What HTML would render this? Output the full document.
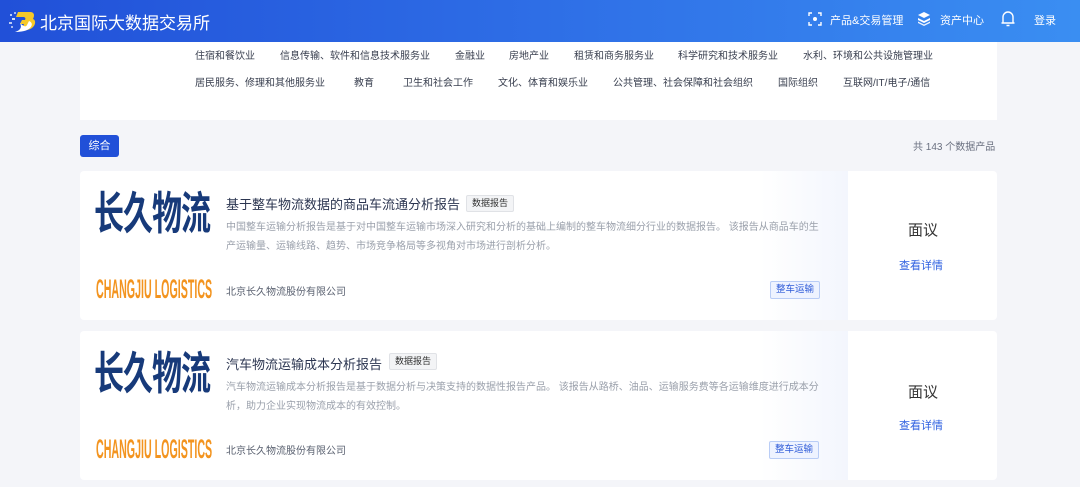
<!DOCTYPE html>
<html><head><meta charset="utf-8"><style>
*{margin:0;padding:0;box-sizing:border-box}
body{width:1080px;height:487px;overflow:hidden;background:#f4f5f9;font-family:"Liberation Sans","Noto Sans CJK SC",sans-serif;position:relative}
.a{position:absolute;white-space:nowrap}
.hdr{position:absolute;left:0;top:0;width:1080px;height:42px;background:linear-gradient(90deg,#2150d8,#2e6ee6 50%,#3a8ef2)}
.panel{position:absolute;left:80px;top:42px;width:917px;height:78px;background:#fff}
.ind{font-size:10px;color:#3a4050}
.card{position:absolute;left:80px;width:917px;height:149px;background:#fff;border-radius:4px;overflow:hidden}
.grad{position:absolute;left:680px;top:0;width:88px;height:149px;background:linear-gradient(90deg,#fff,#f3f6fd)}
.logo1{position:absolute;left:14px;top:16px;font-size:30px;line-height:30px;font-weight:bold;color:#173a7a;letter-spacing:-1px;transform:scaleY(1.5);transform-origin:top left;font-family:"Noto Sans CJK SC",sans-serif}
.logo2{position:absolute;left:16px;top:105px;font-size:27px;line-height:27px;font-weight:bold;color:#f3941f;transform:scaleX(0.395);transform-origin:left top;font-family:"Liberation Sans",sans-serif}
.title{position:absolute;left:146px;font-size:13px;color:#2b3550}
.tag{position:absolute;font-size:9px;color:#333;background:#f3f4f6;border:1px solid #e0e2e6;border-radius:2px;padding:2px 5px;line-height:11px}
.desc{position:absolute;left:146px;width:600px;font-size:10px;line-height:19px;color:#9aa0ab}
.co{position:absolute;left:146px;font-size:10px;color:#5a6170}
.tag2{position:absolute;left:690px;font-size:9.5px;color:#2e5bd8;background:#eef3ff;border:1px solid #b9cdf6;border-radius:2px;padding:2px 5px;line-height:12px}
.price{position:absolute;left:828px;font-size:15px;color:#333}
.link{position:absolute;left:819px;font-size:11px;color:#2d5fe0}
</style></head><body>
<div class="hdr">
 <svg class="a" style="left:8px;top:9px" width="28" height="24" viewBox="0 0 28 24">
  <rect x="2" y="5" width="2" height="2" fill="#fff" opacity=".7"/><rect x="4" y="9" width="3" height="2" fill="#fff" opacity=".8"/><rect x="1" y="13" width="3" height="2" fill="#fff" opacity=".7"/><rect x="6" y="3" width="2" height="2" fill="#fff" opacity=".6"/><rect x="3" y="17" width="2" height="2" fill="#fff" opacity=".6"/>
  <path d="M10 3h12c4 0 5 3 3 7c3 1 3 6-1 9c-3 2-8 3-14 3c3-2 5-4 6-7h-4l2-4h3c1-2 0-3-2-3h-7z" fill="#f6c928"/>
  <path d="M12 14c2 4 1 7-5 9c6 0 12-1 15-4c3-3 2-6-1-7l-2 4c-1 2-3 2-7-2z" fill="#fff"/>
 </svg>
 <div class="a" style="left:40px;top:9px;font-size:17px;color:#fff">北京国际大数据交易所</div>
 <svg class="a" style="left:808px;top:12px" width="14" height="14" viewBox="0 0 14 14" fill="none" stroke="#fff" stroke-width="1.4"><path d="M1 4V1h3M10 1h3v3M13 10v3h-3M4 13H1v-3"/><circle cx="7" cy="7" r="1.3" fill="#fff"/></svg>
 <div class="a" style="left:830px;top:12px;font-size:11px;color:#fff">产品&amp;交易管理</div>
 <svg class="a" style="left:917px;top:11px" width="14" height="15" viewBox="0 0 14 15" fill="#fff"><path d="M7 1l6 3-6 3-6-3z"/><path d="M1 7l6 3 6-3v2l-6 3-6-3z"/><path d="M1 10.5l6 3 6-3v1.5l-6 3-6-3z" opacity=".9"/></svg>
 <div class="a" style="left:940px;top:12px;font-size:11px;color:#fff">资产中心</div>
 <svg class="a" style="left:1000px;top:10px" width="16" height="17" viewBox="0 0 16 17" fill="none" stroke="#fff" stroke-width="1.4"><path d="M3 13V7a5 5 0 0110 0v6M1.5 13h13M6.5 15.5h3"/></svg>
 <div class="a" style="left:1034px;top:12px;font-size:11px;color:#fff">登录</div>
</div>
<div class="panel"></div>
<div class="a ind" style="left:195px;top:47px">住宿和餐饮业</div>
<div class="a ind" style="left:280px;top:47px">信息传输、软件和信息技术服务业</div>
<div class="a ind" style="left:455px;top:47px">金融业</div>
<div class="a ind" style="left:509px;top:47px">房地产业</div>
<div class="a ind" style="left:574px;top:47px">租赁和商务服务业</div>
<div class="a ind" style="left:678px;top:47px">科学研究和技术服务业</div>
<div class="a ind" style="left:803px;top:47px">水利、环境和公共设施管理业</div>
<div class="a ind" style="left:195px;top:74px">居民服务、修理和其他服务业</div>
<div class="a ind" style="left:354px;top:74px">教育</div>
<div class="a ind" style="left:403px;top:74px">卫生和社会工作</div>
<div class="a ind" style="left:498px;top:74px">文化、体育和娱乐业</div>
<div class="a ind" style="left:613px;top:74px">公共管理、社会保障和社会组织</div>
<div class="a ind" style="left:778px;top:74px">国际组织</div>
<div class="a ind" style="left:843px;top:74px">互联网/IT/电子/通信</div>

<div class="a" style="left:80px;top:135px;width:39px;height:22px;background:#2150d8;border-radius:3px;color:#fff;font-size:11px;text-align:center;line-height:22px">综合</div>
<div class="a" style="left:913px;top:138px;font-size:10px;color:#6a7080">共 143 个数据产品</div>

<div class="card" style="top:171px">
 <div class="grad"></div>
 <div class="logo1">长久物流</div>
 <div class="logo2">CHANGJIU LOGISTICS</div>
 <div class="title" style="top:23px">基于整车物流数据的商品车流通分析报告</div>
 <div class="tag" style="left:386px;top:24px">数据报告</div>
 <div class="desc" style="top:47px">中国整车运输分析报告是基于对中国整车运输市场深入研究和分析的基础上编制的整车物流细分行业的数据报告。 该报告从商品车的生产运输量、运输线路、趋势、市场竞争格局等多视角对市场进行剖析分析。</div>
 <div class="co" style="top:112px">北京长久物流股份有限公司</div>
 <div class="tag2" style="top:110px">整车运输</div>
 <div class="price" style="top:48px">面议</div>
 <div class="link" style="top:86px">查看详情</div>
</div>

<div class="card" style="top:331px">
 <div class="grad"></div>
 <div class="logo1">长久物流</div>
 <div class="logo2">CHANGJIU LOGISTICS</div>
 <div class="title" style="top:23px">汽车物流运输成本分析报告</div>
 <div class="tag" style="left:309px;top:22px">数据报告</div>
 <div class="desc" style="top:47px">汽车物流运输成本分析报告是基于数据分析与决策支持的数据性报告产品。 该报告从路桥、油品、运输服务费等各运输维度进行成本分析，助力企业实现物流成本的有效控制。</div>
 <div class="co" style="top:111px">北京长久物流股份有限公司</div>
 <div class="tag2" style="left:689px;top:110px">整车运输</div>
 <div class="price" style="top:50px">面议</div>
 <div class="link" style="top:86px">查看详情</div>
</div>
</body></html>
